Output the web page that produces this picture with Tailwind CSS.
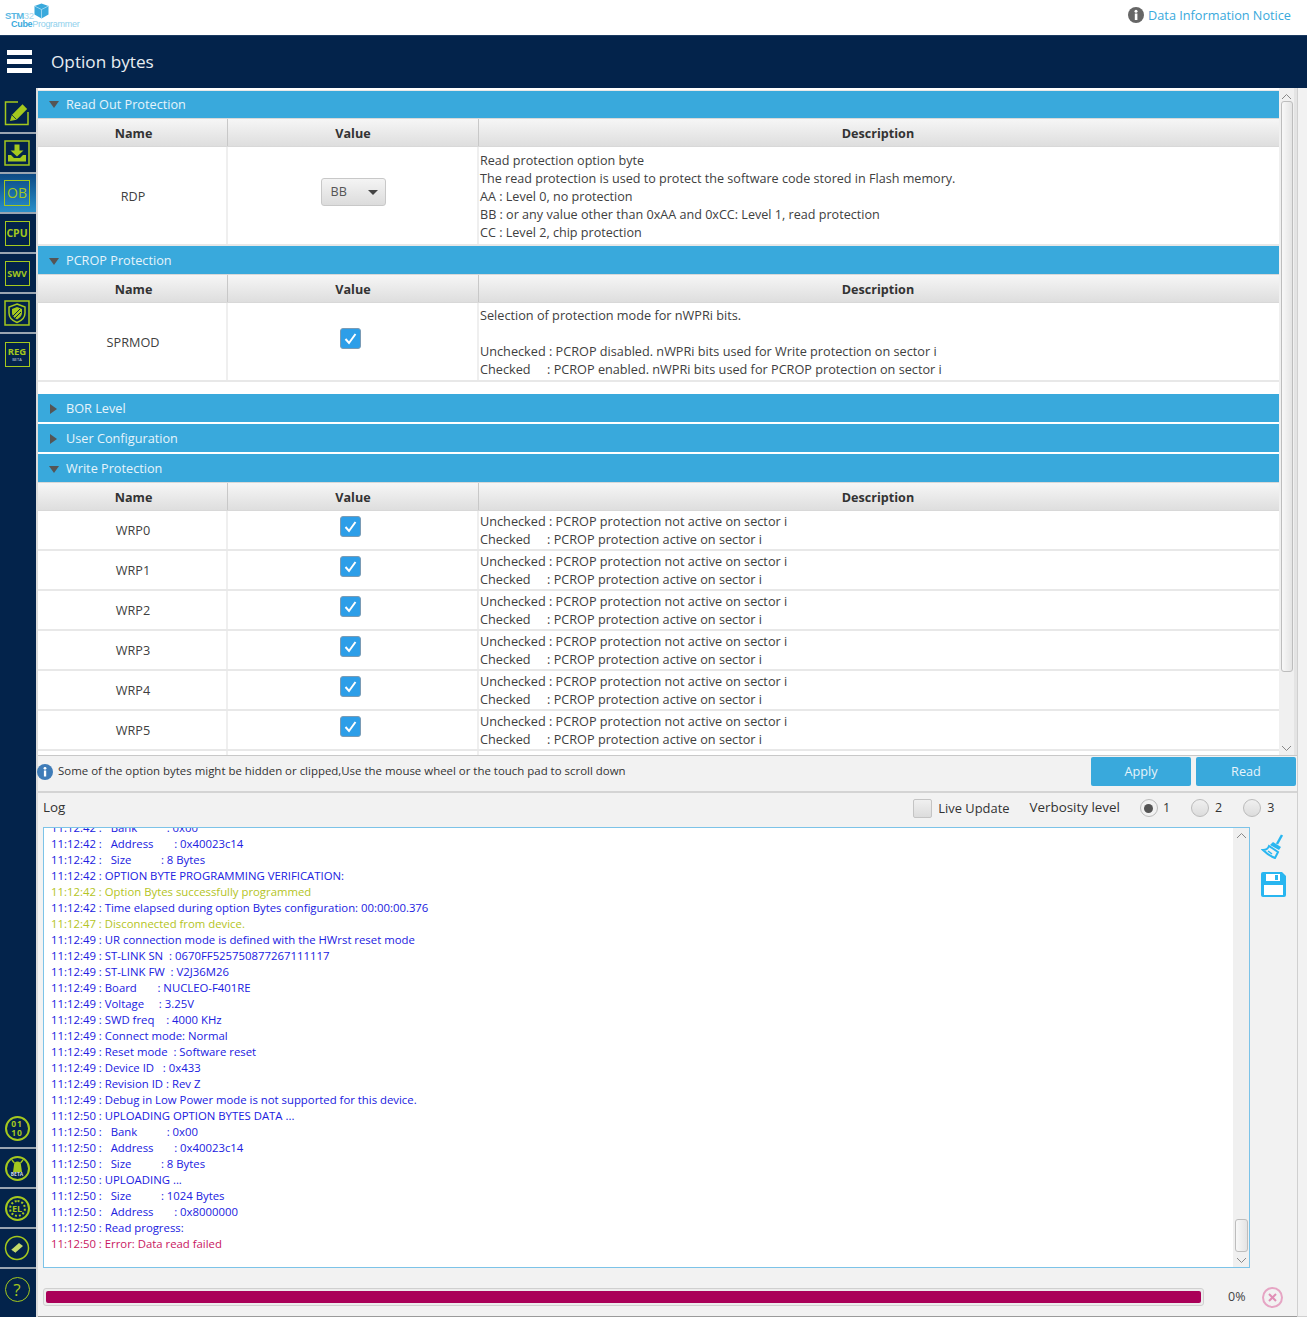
<!DOCTYPE html>
<html lang="en">
<head>
  <meta charset="UTF-8" />
  <title>STM32CubeProgrammer - Option bytes</title>
  <script src="https://cdn.jsdelivr.net/npm/@tailwindcss/browser@4"></script>
</head>
<body class="bg-[#f2f2f2] font-['Open_Sans',sans-serif] text-[#404040]">
<div class="w-[1307px] h-[1317px] flex flex-col overflow-hidden">

  <!-- top bar -->
  <header class="h-[35px] bg-white flex items-center justify-between pr-4 pb-[4px] shrink-0">
    <div class="relative w-[80px] h-[31px] font-['Liberation_Sans',sans-serif]">
      <span class="absolute left-[5px] top-[11px] text-[9.500px] leading-[9px] font-bold text-[#5ab7e2] tracking-[-0.4px]">STM<span class="font-normal text-[#a8d8ee]">32</span></span>
      <span class="absolute left-[11px] top-[20px] text-[9px] leading-[9px] text-[#8fd0ec] tracking-[-0.3px] whitespace-nowrap"><b class="text-[#39a9dc]">Cube</b>Programmer</span>
      <svg class="absolute left-[33px] top-[3px]" width="17" height="16" viewBox="0 0 16 16"><path d="M8 .500l7 2.500v8.500L8 15.500 1 11.500V3z" fill="#39a9dc"/><path d="M1 3l7 3.500L15 3M8 6.500v9" fill="none" stroke="#bfe4f5" stroke-width=".7"/></svg>
    </div>
    <div class="flex items-center gap-[4px]">
      <svg width="16" height="16" viewBox="0 0 16 16"><circle cx="8" cy="8" r="8" fill="#666"/><rect x="6.800" y="6.500" width="2.600" height="6.500" fill="#fff"/><circle cx="8" cy="4.300" r="1.500" fill="#fff"/></svg>
      <span class="text-[12.700px] text-[#39a9dc]">Data Information Notice</span>
    </div>
  </header>

  <!-- title bar -->
  <div class="h-[53px] bg-[#03234b] flex items-center shrink-0 border-t border-[#1b3a60]">
    <div class="w-[25px] ml-[7px] -mt-[2px] flex flex-col gap-[4px]">
      <div class="h-[5px] bg-white"></div><div class="h-[5px] bg-white"></div><div class="h-[5px] bg-white"></div>
    </div>
    <h1 class="ml-[19px] text-[17.200px] text-[#e8edf2]">Option bytes</h1>
  </div>

  <div class="flex flex-1 min-h-0">
    <!-- sidebar -->
    <nav class="w-[36px] bg-[#03234b] flex flex-col shrink-0 text-[#a4c81e]">
      <div class="h-[6px]"></div>
      <div class="h-[40px] flex items-center justify-center border-b-2 border-[#9aa5b1] pr-[2px]">
        <svg width="26" height="26" viewBox="0 0 26 26" fill="none"><path d="M14 2H1.500v22.500H24V12" stroke="#a4c81e" stroke-width="1.500"/><path d="M6 21l1.800-6L18.500 4.300l4.700 4.700L12.500 19.700z" fill="#a4c81e"/><path d="M8 15l4.500 4.500" stroke="#03234b" stroke-width=".8"/></svg>
      </div>
      <div class="h-[40px] flex items-center justify-center border-b-2 border-[#9aa5b1] pr-[2px]">
        <svg width="26" height="26" viewBox="0 0 26 26" fill="none"><rect x="1" y="1" width="24" height="24" stroke="#a4c81e" stroke-width="1.500"/><path d="M10.500 4.500h5v6h4L13 16.500l-6.500-6h4z" fill="#a4c81e"/><path d="M4 15h3l3 3h6l3-3h3v6.500H4z" fill="#a4c81e"/></svg>
      </div>
      <div class="h-[40px] flex items-center justify-center border-b-2 border-[#9aa5b1] pr-[2px] bg-gradient-to-b from-[#0d4a85] to-[#2a8fc9]">
        <div class="w-[26px] h-[26px] border-[1.500px] border-[#a4c81e] flex items-center justify-center text-[14px] leading-none">OB</div>
      </div>
      <div class="h-[40px] flex items-center justify-center border-b-2 border-[#9aa5b1] pr-[2px]">
        <div class="w-[25px] h-[25px] border-[1.500px] border-[#a4c81e] flex items-center justify-center text-[10.500px] font-bold leading-none">CPU</div>
      </div>
      <div class="h-[40px] flex items-center justify-center border-b-2 border-[#9aa5b1] pr-[2px]">
        <div class="w-[25px] h-[25px] border-[1.500px] border-[#a4c81e] flex items-center justify-center text-[9px] font-bold leading-none">SWV</div>
      </div>
      <div class="h-[40px] flex items-center justify-center border-b-2 border-[#9aa5b1] pr-[2px]">
        <svg width="26" height="26" viewBox="0 0 26 26" fill="none"><rect x="1" y="1" width="24" height="24" stroke="#a4c81e" stroke-width="1.500"/><path d="M13 4l8 3v6c0 5-4 8-8 9.500C9 21 5 18 5 13V7z" stroke="#a4c81e" stroke-width="1.500"/><path d="M13 7l5 2v4c0 3-2.500 5-5 6.500-2.500-1.500-5-3.500-5-6.500V9z" fill="#a4c81e"/><path d="M9 16l7-7M11 18l6-6" stroke="#03234b"/></svg>
      </div>
      <div class="h-[40px] flex items-center justify-center pr-[2px]">
        <div class="w-[25px] h-[25px] border-[1.500px] border-[#a4c81e] flex flex-col items-center justify-center leading-none">
          <span class="text-[9.500px] font-bold leading-[10px]">REG</span>
          <span class="text-[4px] text-[#cfd8e0] leading-[5px]">BETA</span>
        </div>
      </div>

      <div class="mt-auto flex flex-col pb-[8px]">
        <div class="h-[40px] flex items-center justify-center border-b-2 border-[#9aa5b1] pr-[2px]">
          <div class="w-[25px] h-[25px] rounded-full border-2 border-[#a4c81e] flex flex-col items-center justify-center text-[8.500px] leading-[9px] font-bold tracking-[1px]"><span>01</span><span>10</span></div>
        </div>
        <div class="h-[40px] flex items-center justify-center border-b-2 border-[#9aa5b1] pr-[2px]">
          <div class="relative w-[25px] h-[25px] rounded-full border-2 border-[#a4c81e]">
            <svg class="absolute left-[4px] top-[1px]" width="13" height="14" viewBox="0 0 13 14" fill="none"><path d="M3 6a3.500 3.500 0 017 0l1 7H2z" fill="#a4c81e"/><path d="M1 1l2.500 3M12 1L9.500 4" stroke="#a4c81e" stroke-width="1.300"/></svg>
            <span class="absolute left-0 right-0 top-[13px] text-center text-[5px] leading-[6px] font-bold text-[#cfd8e0]">BETA</span>
          </div>
        </div>
        <div class="h-[40px] flex items-center justify-center border-b-2 border-[#9aa5b1] pr-[2px]">
          <div class="w-[25px] h-[25px] rounded-full border-2 border-[#a4c81e] flex items-center justify-center">
            <div class="w-[17px] h-[17px] rounded-full border-2 border-dotted border-[#a4c81e] flex items-center justify-center text-[9px] font-bold leading-none">EL</div>
          </div>
        </div>
        <div class="h-[40px] flex items-center justify-center border-b-2 border-[#9aa5b1] pr-[2px]">
          <svg width="26" height="26" viewBox="0 0 26 26" fill="none"><circle cx="13" cy="13" r="11.500" stroke="#a4c81e" stroke-width="1.500"/><path d="M7 15l8-7 4 3-8 7z" fill="#c4d96a"/><path d="M7 15l4 3" stroke="#03234b"/></svg>
        </div>
        <div class="h-[40px] flex items-center justify-center pr-[2px]">
          <div class="w-[25px] h-[25px] rounded-full border-[1.500px] border-[#a4c81e] flex items-center justify-center text-[17px] leading-none">?</div>
        </div>
      </div>
    </nav>

    <div class="w-[2px] bg-[#dcdcdc] shrink-0"></div>

    <!-- main column -->
    <main class="w-[1259px] flex flex-col shrink-0 border-b border-[#9a9a9a]">
      <!-- option byte panel -->
      <div class="h-[668px] flex overflow-hidden shrink-0 bg-white border-b border-[#c8c8c8]">
        <div class="w-[1241px] bg-white overflow-hidden pt-[2px]" id="sections">
          <div class="h-[28px] bg-[#39a9dc] flex items-center text-[12.700px] text-[#e6f4fb] border-t border-[#e8e8e8]">
            <span class="ml-[11px] w-0 h-0 border-x-[5px] border-x-transparent border-t-[7px] border-t-[#555]"></span>
            <span class="ml-[7px]">Read Out Protection</span>
          </div>
          <div class="h-[29px] flex border-y border-[#d8d8d8] bg-gradient-to-b from-[#f6f6f6] to-[#dedede] text-[12.600px] font-bold text-[#333] text-center items-center">
            <div class="w-[190px] border-r border-[#c8c8c8] h-full flex items-center justify-center pt-[3px] pl-[2px]">Name</div>
            <div class="w-[251px] border-r border-[#c8c8c8] h-full flex items-center justify-center pt-[3px]">Value</div>
            <div class="flex-1 pt-[3px] pr-[2px]">Description</div>
          </div>
          <div class="h-[99px] flex border-b-2 border-[#e8e8e8] text-[12.600px]">
            <div class="w-[190px] border-r-2 border-[#efefef] flex items-center justify-center pt-[3px] pl-[2px]">RDP</div>
            <div class="w-[251px] border-r-2 border-[#efefef] flex items-center justify-center pb-[7px] pl-[1px]">
              <div class="w-[65px] h-[28px] rounded-[3px] border border-[#c8c8c8] bg-gradient-to-b from-[#f4f4f4] to-[#dcdcdc] flex items-center justify-between pl-[9px] pr-[7px] text-[#555]">
                BB<span class="w-0 h-0 border-x-[5px] border-x-transparent border-t-[5px] border-t-[#444]"></span>
              </div>
            </div>
            <div class="flex-1 pl-[1px] pt-[5px] leading-[18px]">
              <p>Read protection option byte</p>
              <p>The read protection is used to protect the software code stored in Flash memory.</p>
              <p>AA : Level 0, no protection</p>
              <p>BB : or any value other than 0xAA and 0xCC: Level 1, read protection</p>
              <p>CC : Level 2, chip protection</p>
            </div>
          </div>

          <div class="h-[28px] bg-[#39a9dc] flex items-center text-[12.700px] text-[#e6f4fb] pt-[2px]">
            <span class="ml-[11px] w-0 h-0 border-x-[5px] border-x-transparent border-t-[7px] border-t-[#555]"></span>
            <span class="ml-[7px]">PCROP Protection</span>
          </div>
          <div class="h-[29px] flex border-y border-[#d8d8d8] bg-gradient-to-b from-[#f6f6f6] to-[#dedede] text-[12.600px] font-bold text-[#333] text-center items-center">
            <div class="w-[190px] border-r border-[#c8c8c8] h-full flex items-center justify-center pt-[3px] pl-[2px]">Name</div>
            <div class="w-[251px] border-r border-[#c8c8c8] h-full flex items-center justify-center pt-[3px]">Value</div>
            <div class="flex-1 pt-[3px] pr-[2px]">Description</div>
          </div>
          <div class="h-[79px] flex border-b-2 border-[#e8e8e8] text-[12.700px]">
            <div class="w-[190px] border-r-2 border-[#efefef] flex items-center justify-center pt-[3px] pl-[2px]">SPRMOD</div>
            <div class="w-[251px] border-r-2 border-[#efefef] flex items-center justify-center pb-[6px] pr-[4px]">
              <div class="w-[21px] h-[21px] rounded-[3px] bg-[#2d9ee8] border border-[#7a9bb5] flex items-center justify-center">
                <svg width="15" height="15" viewBox="0 0 15 15" fill="none"><path d="M2.500 8l3.500 4 6.500-9" stroke="#fff" stroke-width="2"/></svg>
              </div>
            </div>
            <div class="flex-1 pl-[1px] pt-[3px] leading-[18px]">
              <p>Selection of protection mode for nWPRi bits.</p>
              <p>&nbsp;</p>
              <p class="whitespace-pre">Unchecked : PCROP disabled. nWPRi bits used for Write protection on sector i</p>
              <p class="whitespace-pre">Checked     : PCROP enabled. nWPRi bits used for PCROP protection on sector i</p>
            </div>
          </div>
          <div class="h-[12px]"></div>

          <div class="h-[28px] bg-[#39a9dc] flex items-center text-[12.700px] text-[#e6f4fb] mb-[2px] pt-[2px]">
            <span class="ml-[12px] w-0 h-0 border-y-[5px] border-y-transparent border-l-[7px] border-l-[#555]"></span>
            <span class="ml-[9px]">BOR Level</span>
          </div>
          <div class="h-[28px] bg-[#39a9dc] flex items-center text-[12.700px] text-[#e6f4fb] mb-[2px] pt-[2px]">
            <span class="ml-[12px] w-0 h-0 border-y-[5px] border-y-transparent border-l-[7px] border-l-[#555]"></span>
            <span class="ml-[9px]">User Configuration</span>
          </div>
          <div class="h-[28px] bg-[#39a9dc] flex items-center text-[12.700px] text-[#e6f4fb] pt-[2px]">
            <span class="ml-[11px] w-0 h-0 border-x-[5px] border-x-transparent border-t-[7px] border-t-[#555]"></span>
            <span class="ml-[7px]">Write Protection</span>
          </div>
          <div class="h-[29px] flex border-y border-[#d8d8d8] bg-gradient-to-b from-[#f6f6f6] to-[#dedede] text-[12.600px] font-bold text-[#333] text-center items-center">
            <div class="w-[190px] border-r border-[#c8c8c8] h-full flex items-center justify-center pt-[3px] pl-[2px]">Name</div>
            <div class="w-[251px] border-r border-[#c8c8c8] h-full flex items-center justify-center pt-[3px]">Value</div>
            <div class="flex-1 pt-[3px] pr-[2px]">Description</div>
          </div>
          <div id="wrp-rows"></div>
          <div class="h-[10px] flex">
            <div class="w-[190px] border-r-2 border-[#efefef]"></div>
            <div class="w-[251px] border-r-2 border-[#efefef]"></div>
          </div>
        </div>
        <!-- panel scrollbar -->
        <div class="w-[15px] bg-[#f0f0f0] flex flex-col items-center shrink-0 relative">
          <svg class="mt-[5px]" width="11" height="7" viewBox="0 0 11 7" fill="none"><path d="M1 6l4.500-4.500L10 6" stroke="#888"/></svg>
          <div class="mt-[1px] w-[12px] h-[571px] rounded-[3px] border border-[#bdbdbd] bg-gradient-to-r from-[#f8f8f8] to-[#e4e4e4]"></div>
          <svg class="mt-auto mb-[3px]" width="11" height="7" viewBox="0 0 11 7" fill="none"><path d="M1 1l4.500 4.500L10 1" stroke="#888"/></svg>
        </div>
        <div class="w-[3px] bg-[#e4e4e4] shrink-0"></div>
      </div>

      <!-- hint + apply/read -->
      <div class="h-[37px] flex items-center shrink-0 border-b-2 border-[#d4d4d4] pb-[4px] pr-px">
        <svg class="-ml-px" width="16" height="16" viewBox="0 0 16 16"><circle cx="8" cy="8" r="8" fill="#3f7cb8"/><rect x="6.900" y="6.500" width="2.300" height="6" fill="#fff"/><circle cx="8" cy="4.300" r="1.400" fill="#fff"/></svg>
        <span class="ml-[5px] -mt-[2px] text-[11.450px] text-[#333]">Some of the option bytes might be hidden or clipped,Use the mouse wheel or the touch pad to scroll down</span>
        <button class="ml-auto w-[100px] h-[29px] rounded-[2px] bg-[#39a9dc] text-[12.700px] text-[#e6f4fb]">Apply</button>
        <button class="ml-[5px] w-[100px] h-[29px] rounded-[2px] bg-[#39a9dc] text-[12.700px] text-[#e6f4fb]">Read</button>
      </div>

      <!-- log header -->
      <div class="h-[34px] flex items-center shrink-0 pl-[5px] pb-[4px] text-[13.400px] text-[#333]">
        <span class="-mt-[2px]">Log</span>
        <span class="ml-[848px] w-[19px] h-[19px] rounded-[2px] border border-[#c4c4c4] bg-gradient-to-b from-[#f0f0f0] to-[#dcdcdc]"></span>
        <span class="ml-[6px] mt-[2px] text-[12.900px]">Live Update</span>
        <span class="ml-[20px] -mt-[2px]">Verbosity level</span>
        <span class="ml-[20px] w-[18px] h-[18px] rounded-full border border-[#bbb] bg-[#f2f2f2] flex items-center justify-center"><span class="w-[9px] h-[9px] rounded-full bg-[#555]"></span></span>
        <span class="ml-[5px] text-[12.500px]">1</span>
        <span class="ml-[21px] w-[18px] h-[18px] rounded-full border border-[#bbb] bg-gradient-to-b from-[#f0f0f0] to-[#dcdcdc]"></span>
        <span class="ml-[6px] text-[12.500px]">2</span>
        <span class="ml-[21px] w-[18px] h-[18px] rounded-full border border-[#bbb] bg-gradient-to-b from-[#f0f0f0] to-[#dcdcdc]"></span>
        <span class="ml-[6px] text-[12.500px]">3</span>
      </div>

      <!-- log box -->
      <div class="flex shrink-0 pl-[5px]">
        <div class="w-[1207px] h-[441px] border border-[#7cc3e8] bg-white flex overflow-hidden">
          <div id="log" class="flex-1 pl-[7px] -mt-[8px] text-[11.350px] leading-[16px] whitespace-pre overflow-hidden"></div>
          <div class="w-[16px] bg-[#f0f0f0] flex flex-col items-center shrink-0">
            <svg class="mt-[4px]" width="11" height="7" viewBox="0 0 11 7" fill="none"><path d="M1 6l4.500-4.500L10 6" stroke="#888"/></svg>
            <div class="mt-auto w-[13px] h-[33px] rounded-[3px] border border-[#bdbdbd] bg-gradient-to-r from-[#f8f8f8] to-[#e4e4e4]"></div>
            <svg class="mt-[5px] mb-[3px]" width="11" height="7" viewBox="0 0 11 7" fill="none"><path d="M1 1l4.500 4.500L10 1" stroke="#888"/></svg>
          </div>
        </div>
        <div class="ml-[10px] flex flex-col items-center w-[26px] pt-[7px] gap-[13px]">
          <svg width="24" height="25" viewBox="0 0 24 25" fill="none"><path d="M21 1l-5 9" stroke="#29b6f0" stroke-width="2.500"/><path d="M12 8l8 5-2 3-9-5z" fill="#29b6f0"/><path d="M8 12l9 6-3 6c-5-2-9-5-12-8 3 0 5-1 6-4z" stroke="#29b6f0" stroke-width="2"/><path d="M7 17l4 3" stroke="#29b6f0" stroke-width="1.500"/></svg>
          <svg width="25" height="25" viewBox="0 0 25 25"><path d="M2 0h19l4 4v19a2 2 0 01-2 2H2a2 2 0 01-2-2V2a2 2 0 012-2z" fill="#29b6f0"/><rect x="5" y="2" width="14" height="7" fill="#fff"/><rect x="14" y="3" width="3" height="5" fill="#29b6f0"/><rect x="3" y="13" width="19" height="10" fill="#fff"/></svg>
        </div>
      </div>

      <!-- progress -->
      <div class="flex-1 flex items-center pl-[5px] pt-[10px]">
        <div class="w-[1161px] h-[18px] rounded-[3px] border border-[#d0d0d0] bg-[#ececec] p-[2px]">
          <div class="h-full rounded-[2px] bg-[#aa0058]"></div>
        </div>
        <span class="ml-[24px] mt-[1px] text-[12.500px] text-[#444]">0%</span>
        <span class="ml-[17px] w-[21px] h-[21px] rounded-full border-2 border-[#e6a5c4] flex items-center justify-center">
          <svg width="9" height="9" viewBox="0 0 9 9" fill="none"><path d="M1 1l7 7M8 1L1 8" stroke="#e08fb6" stroke-width="2"/></svg>
        </span>
      </div>
    </main>

    <div class="flex-1 border-l border-[#d0d0d0] border-b bg-[#f2f2f2]"></div>
  </div>
</div>

<script>
  // write protection rows
  const wrpRows = ["WRP0", "WRP1", "WRP2", "WRP3", "WRP4", "WRP5"];
  document.getElementById("wrp-rows").innerHTML = wrpRows.map((name) =>
    '<div class="h-[40px] flex border-b-2 border-[#e8e8e8] text-[12.700px]">' +
      '<div class="w-[190px] border-r-2 border-[#efefef] flex items-center justify-center pt-[1px] pl-[2px]">' + name + '</div>' +
      '<div class="w-[251px] border-r-2 border-[#efefef] flex items-center justify-center pb-[8px] pr-[4px]">' +
        '<div class="w-[21px] h-[21px] rounded-[3px] bg-[#2d9ee8] border border-[#7a9bb5] flex items-center justify-center">' +
          '<svg width="15" height="15" viewBox="0 0 15 15" fill="none"><path d="M2.500 8l3.500 4 6.500-9" stroke="#fff" stroke-width="2"/></svg>' +
        '</div>' +
      '</div>' +
      '<div class="flex-1 pl-[1px] leading-[18px] pt-[1px] whitespace-pre">' +
        '<p>Unchecked : PCROP protection not active on sector i</p>' +
        '<p>Checked     : PCROP protection active on sector i</p>' +
      '</div>' +
    '</div>'
  ).join("");

  // b = info, y = success, r = error
  const logLines = [
    ["b", "11:12:42 :   Bank          : 0x00"],
    ["b", "11:12:42 :   Address       : 0x40023c14"],
    ["b", "11:12:42 :   Size          : 8 Bytes"],
    ["b", "11:12:42 : OPTION BYTE PROGRAMMING VERIFICATION:"],
    ["y", "11:12:42 : Option Bytes successfully programmed"],
    ["b", "11:12:42 : Time elapsed during option Bytes configuration: 00:00:00.376"],
    ["y", "11:12:47 : Disconnected from device."],
    ["b", "11:12:49 : UR connection mode is defined with the HWrst reset mode"],
    ["b", "11:12:49 : ST-LINK SN  : 0670FF525750877267111117"],
    ["b", "11:12:49 : ST-LINK FW  : V2J36M26"],
    ["b", "11:12:49 : Board       : NUCLEO-F401RE"],
    ["b", "11:12:49 : Voltage     : 3.25V"],
    ["b", "11:12:49 : SWD freq    : 4000 KHz"],
    ["b", "11:12:49 : Connect mode: Normal"],
    ["b", "11:12:49 : Reset mode  : Software reset"],
    ["b", "11:12:49 : Device ID   : 0x433"],
    ["b", "11:12:49 : Revision ID : Rev Z"],
    ["b", "11:12:49 : Debug in Low Power mode is not supported for this device."],
    ["b", "11:12:50 : UPLOADING OPTION BYTES DATA ..."],
    ["b", "11:12:50 :   Bank          : 0x00"],
    ["b", "11:12:50 :   Address       : 0x40023c14"],
    ["b", "11:12:50 :   Size          : 8 Bytes"],
    ["b", "11:12:50 : UPLOADING ..."],
    ["b", "11:12:50 :   Size          : 1024 Bytes"],
    ["b", "11:12:50 :   Address       : 0x8000000"],
    ["b", "11:12:50 : Read progress:"],
    ["r", "11:12:50 : Error: Data read failed"],
  ];
  const logColors = { b: "text-[#2020e0]", y: "text-[#b4c424]", r: "text-[#c8175f]" };
  document.getElementById("log").innerHTML = logLines.map(([kind, text]) =>
    '<div class="' + logColors[kind] + '">' + text + '</div>'
  ).join("");
</script>
</body>
</html>
